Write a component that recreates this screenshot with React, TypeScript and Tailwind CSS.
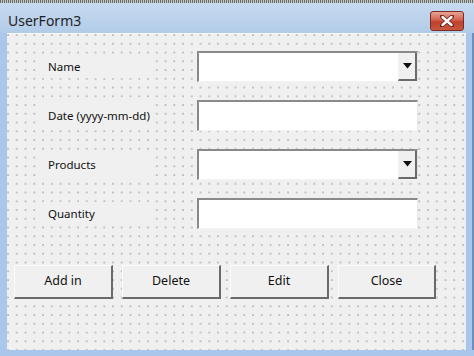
import React from "react";

const font = { fontFamily: '"Noto Sans", "Open Sans", Arial, sans-serif' };

function Label({ text }: { text: string }) {
  return (
    <div className="h-[23px] w-[113px] bg-[#f0f0f0] flex items-center pl-[6px] text-[11.5px] text-[#111]">
      {text}
    </div>
  );
}

function Field({ combo }: { combo?: boolean }) {
  return (
    <div className="h-[31px] w-[221px] bg-white border-t-2 border-l-2 border-[#8a8a8a] border-r border-b border-r-[#e8e8e8] border-b-[#f4f4f4] flex justify-end">
      {combo && (
        <div className="w-[19px] h-full bg-[#f0f0f0] border-r-2 border-b-2 border-[#6a6a6a] border-l border-l-[#f0f0f0] flex items-center justify-center">
          <svg width="9" height="6" viewBox="0 0 9 6">
            <path d="M0 0 H9 L4.5 5.5 Z" fill="#111" />
          </svg>
        </div>
      )}
    </div>
  );
}

function Btn({ text, w }: { text: string; w: string }) {
  return (
    <div
      className={`${w} h-[34px] bg-[#f0f0f0] border-t border-l border-[#fbfbfb] border-r-2 border-b-2 border-r-[#6a6a6a] border-b-[#6a6a6a] flex items-center justify-center text-[12.5px] text-[#111]`}
    >
      {text}
    </div>
  );
}

export default function App() {
  return (
    <div
      className="w-[474px] h-[356px] bg-[#aac6ea] flex flex-col overflow-hidden"
      style={font}
    >
      <div className="h-[3px] bg-[#9a9a9a] bg-[repeating-linear-gradient(90deg,#6b6b6b_0px,#6b6b6b_1px,#c8c8c8_1px,#c8c8c8_2px)]" />
      <div className="h-[30px] bg-[linear-gradient(180deg,#c6daef,#b2cbe8)] flex items-center justify-between pl-[8px] pr-[10px]">
        <span className="text-[14px] text-[#1e1e1e] mt-[4px]">UserForm3</span>
        <div className="w-[34px] h-[20px] mt-[6px] rounded-[3px] border border-[#7a2a22] bg-[linear-gradient(180deg,#e9a596_0%,#d2604d_45%,#c0402c_55%,#c85840_100%)] flex items-center justify-center">
          <svg width="14" height="12" viewBox="0 0 14 12">
            <path
              d="M2 1.5 L12 10.5 M12 1.5 L2 10.5"
              stroke="#6b2018"
              strokeWidth="4"
              strokeLinecap="round"
            />
            <path
              d="M2.5 2 L11.5 10 M11.5 2 L2.5 10"
              stroke="#ffffff"
              strokeWidth="2.4"
              strokeLinecap="round"
            />
          </svg>
        </div>
      </div>
      <div className="flex pb-[6px] flex-1">
        <div className="w-[7px]" />
        <div className="w-[458px] h-[317px] bg-[#f0f0f0] bg-[radial-gradient(circle_at_1px_1px,#b0b0b0_0.6px,transparent_0.9px)] bg-[length:8.75px_8.75px] border-t border-[#fafafa] flex flex-col pt-[17px]">
          <div className="grid grid-cols-[113px_221px] gap-x-[42px] gap-y-[18px] pl-[35px] items-center">
            <Label text="Name" />
            <Field combo />
            <Label text="Date (yyyy-mm-dd)" />
            <Field />
            <Label text="Products" />
            <Field combo />
            <Label text="Quantity" />
            <Field />
          </div>
          <div className="flex gap-[9px] pl-[7px] mt-[36px]">
            <Btn text="Add in" w="w-[99px]" />
            <Btn text="Delete" w="w-[99px]" />
            <Btn text="Edit" w="w-[99px]" />
            <Btn text="Close" w="w-[98px]" />
          </div>
        </div>
        <div className="flex-1 border-l border-[#e6eef8] bg-[#aac6ea] flex justify-end">
          <div className="w-[2px] bg-[#6f8fb8]" />
        </div>
      </div>
    </div>
  );
}
